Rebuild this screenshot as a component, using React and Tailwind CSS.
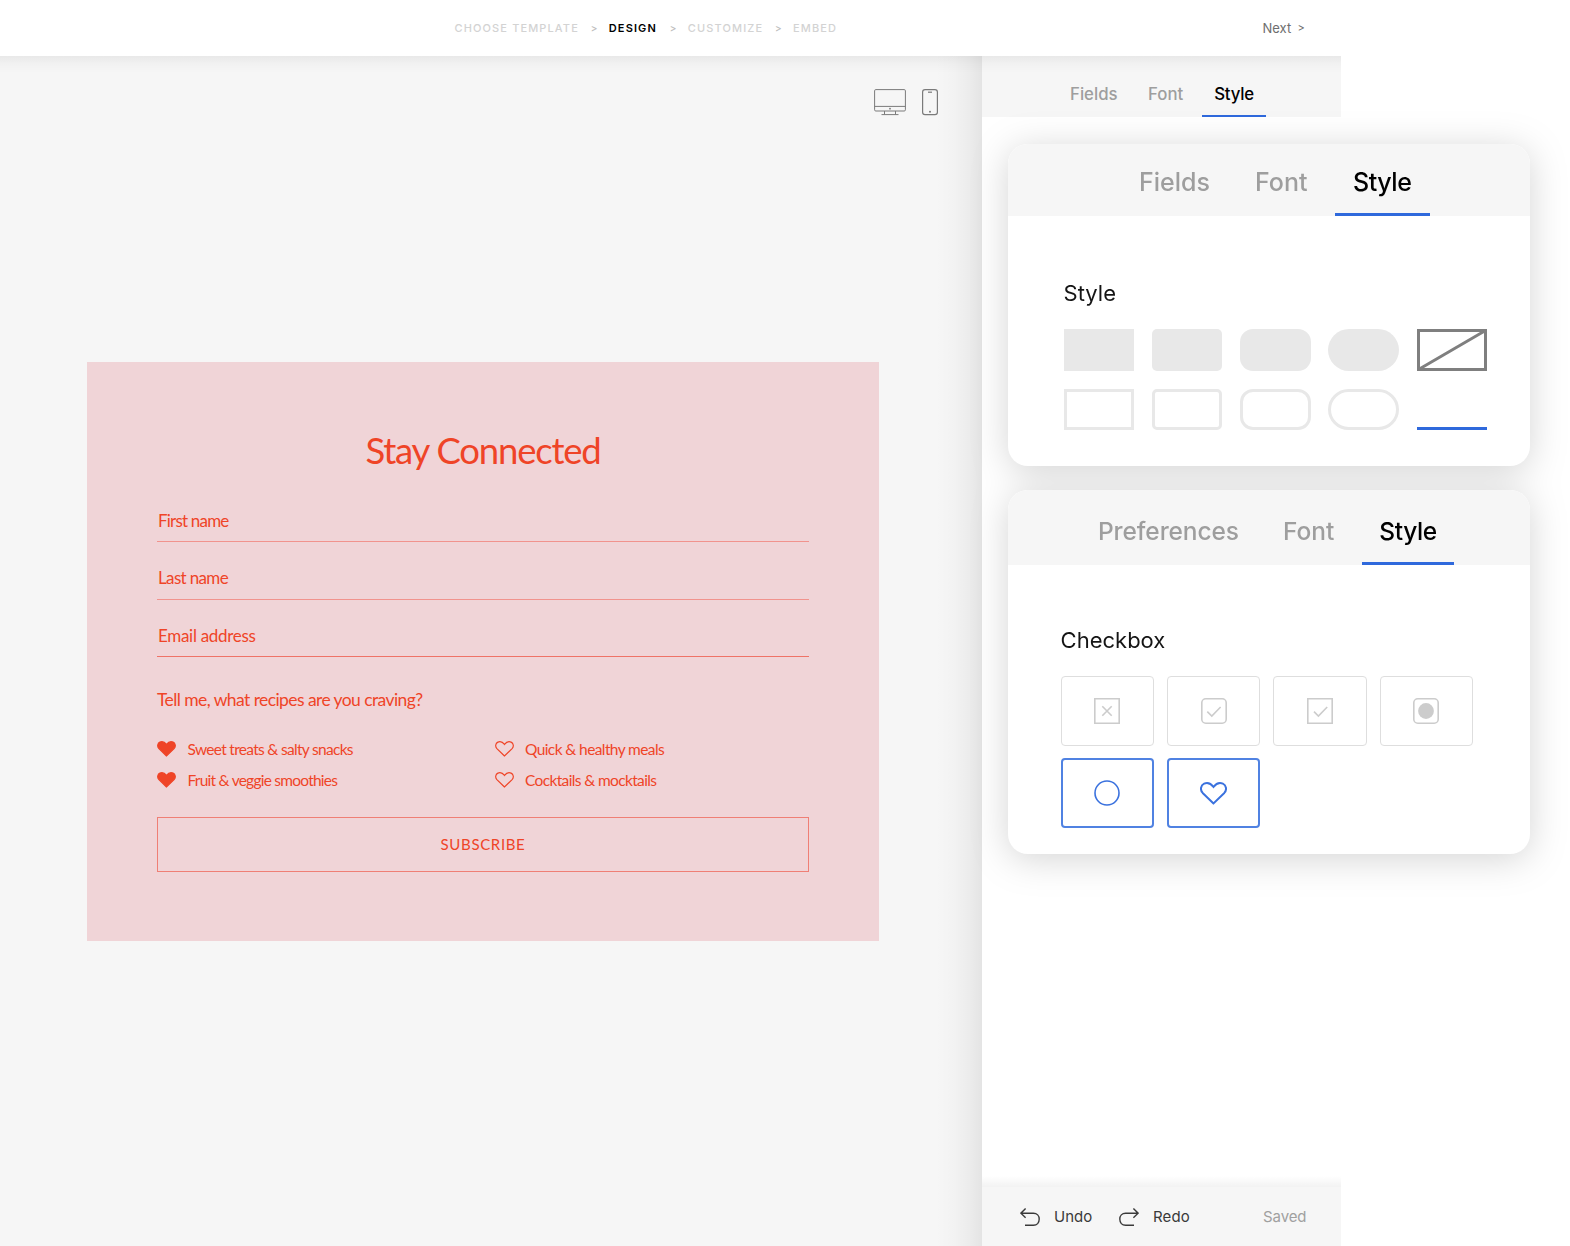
// src/App.jsx
import clsx from 'clsx';

const HEART =
  'M9.5 15 L1.9 7.6 C-0.1 5.5 0.5 2.2 2.9 1.1 C5.2 0.1 7.6 0.9 9.5 3.4 C11.4 0.9 13.8 0.1 16.1 1.1 C18.5 2.2 19.1 5.5 17.1 7.6 Z';

const Heart = ({ className, filled, stroke = 1.3 }) => (
  <svg
    viewBox="0 0 19 16"
    className={className}
    fill={filled ? 'currentColor' : 'none'}
    stroke="currentColor"
    strokeWidth={stroke}
  >
    <path d={HEART} />
  </svg>
);

const Monitor = () => (
  <svg viewBox="0 0 32 27" className="w-8 h-[27px]" fill="none" stroke="currentColor">
    <rect x="0.6" y="0.6" width="30.8" height="21.4" rx="1.2" />
    <path d="M0.6 17.4H31.4M10.5 22V25.4M21.5 22V25.4M7.5 25.6H24.5" />
    <circle cx="16" cy="19.7" r="0.9" fill="currentColor" stroke="none" />
  </svg>
);

const Phone = () => (
  <svg viewBox="0 0 16 27" className="w-4 h-[27px]" fill="none" stroke="currentColor" strokeWidth="1.2">
    <rect x="0.6" y="0.6" width="14.8" height="25" rx="2.4" />
    <path d="M6 3.2H10" />
    <circle cx="8" cy="22.7" r="1" fill="currentColor" stroke="none" />
  </svg>
);

const UndoArrow = ({ className }) => (
  <svg
    viewBox="0 0 20 18"
    className={clsx('w-5 h-[18px]', className)}
    fill="none"
    stroke="currentColor"
    strokeWidth="1.4"
  >
    <path d="M5.6 0.6L0.9 5.2L5.6 9.8M0.9 5.2H13.4C17 5.2 19.2 7.8 19.2 11C19.2 14.5 17 17.2 13.4 17.2H5" />
  </svg>
);

/* Breadcrumb steps shown in the top bar */
const steps = [
  { label: 'CHOOSE TEMPLATE', width: 'w-[136.3px]' },
  { label: 'DESIGN', width: 'w-[61px]', active: true },
  { label: 'CUSTOMIZE', width: 'w-[87.3px]' },
  { label: 'EMBED', width: 'w-[44px]' },
];

const fields = [
  { label: 'First name', line: 'border-[#f1938d] tracking-[-0.8px]' },
  { label: 'Last name', line: 'border-[#f1938d] tracking-[-0.65px]' },
  { label: 'Email address', line: 'border-[#ef7367] tracking-[-0.3px]' },
];

const recipes = [
  { label: 'Sweet treats & salty snacks', checked: true, tracking: 'tracking-[-0.7px]' },
  { label: 'Quick & healthy meals', tracking: 'tracking-[-0.6px]' },
  { label: 'Fruit & veggie smoothies', checked: true, tracking: 'tracking-[-0.76px]' },
  { label: 'Cocktails & mocktails', tracking: 'tracking-[-0.64px]' },
];

const radii = ['rounded-none', 'rounded-[5px]', 'rounded-[13px]', 'rounded-[21px]'];

function TopBar() {
  return (
    <header className="flex items-center h-14 pl-[454.5px] bg-white">
      <nav className="flex w-[808px] text-[11px] leading-[56px] font-medium tracking-[1.12px] text-[#d3d3d3]">
        {steps.map((step, i) => (
          <div key={step.label} className="flex">
            <span className={clsx(step.width, 'whitespace-nowrap', step.active && 'text-black font-semibold')}>
              {step.label}
            </span>
            {i < steps.length - 1 && <span className="w-[18px] text-[10px] text-[#bdbdbd]">&gt;</span>}
          </div>
        ))}
      </nav>
      <button className="flex text-[13px] leading-[55px] text-[#6e6e6e]">
        <span className="w-[35px] text-left">Next</span>
        <span className="text-[11px]">&gt;</span>
      </button>
    </header>
  );
}

function SubscribeForm() {
  return (
    <section className="w-[792px] h-[579px] mt-[246px] ml-[87px] px-[70px] pt-[66px] bg-[#f0d4d7] text-[#ef4427] font-['Lato',sans-serif]">
      <h1 className="h-12 text-center text-[36.5px] leading-[44px] tracking-[-1.2px] whitespace-nowrap">
        Stay Connected
      </h1>

      <div className="pt-[9px]">
        {fields.map((field) => (
          <div
            key={field.label}
            className={clsx('h-[57.33px] pt-[17px] pl-[1px] border-b text-[17px] leading-[37px]', field.line)}
          >
            {field.label}
          </div>
        ))}
      </div>

      <p className="mt-[31px] text-[17.5px] leading-[24px] tracking-[-0.58px]">Tell me, what recipes are you craving?</p>

      <div className="grid grid-cols-[337.5px_1fr] mt-[22px]">
        {recipes.map((recipe) => (
          <div key={recipe.label} className="flex items-center h-[30.5px] gap-[11.5px]">
            <Heart className="w-[19px] h-4" filled={recipe.checked} stroke={1.2} />
            <span className={clsx('text-[15.5px] leading-[30px] whitespace-nowrap', recipe.tracking)}>
              {recipe.label}
            </span>
          </div>
        ))}
      </div>

      <button className="w-full h-[55px] mt-[22px] border border-[#ef7f75] text-[15px] tracking-[0.65px]">
        SUBSCRIBE
      </button>
    </section>
  );
}

function StyleCard() {
  return (
    <section className="w-[522px] h-[322px] rounded-[20px] overflow-hidden bg-white">
      <div className="flex h-[72px] pl-[131px] bg-[#f6f6f6] text-[25px] leading-[76px] font-medium text-[#9e9e9e]">
        <span className="w-[116px]">Fields</span>
        <span className="w-[80px]">Font</span>
        <span className="w-[94.5px] border-b-3 border-[#2f69dc] text-center text-black tracking-[-0.4px]">Style</span>
      </div>
      <div className="pt-[60px] pl-[55.6px]">
        <h2 className="h-[53px] text-[22px] leading-[34px] text-[#151515]">Style</h2>
        <div className="grid grid-cols-[repeat(5,70.4px)] gap-x-[17.9px] gap-y-[18px]">
          {radii.map((radius) => (
            <div key={radius} className={clsx('h-[42px] bg-[#e8e8e8]', radius)} />
          ))}
          <svg viewBox="0 0 70 42" className="w-[70px] h-[42px]" fill="none" stroke="#7f7f7f" strokeWidth="3">
            <path d="M1.5 1.5H68.5V40.5H1.5ZM1.5 40.5L68.5 1.5" />
          </svg>
          {radii.map((radius) => (
            <div key={radius} className={clsx('h-[41px] border-3 border-[#e8e8e8]', radius)} />
          ))}
          <div className="h-[41px] border-b-3 border-[#2f69dc]" />
        </div>
      </div>
    </section>
  );
}

/* Glyph inside each checkbox tile */
const marks = [
  <path d="M0.8 0.8H25.2V25.2H0.8ZM8.3 8.3L17.7 17.7M17.7 8.3L8.3 17.7" />,
  <>
    <rect x="0.8" y="0.8" width="24.4" height="24.4" rx="4" />
    <path d="M6.3 13.6L10.8 18L19.6 9" />
  </>,
  <path d="M0.8 0.8H25.2V25.2H0.8ZM7 13.6L11.4 18L20.2 9" />,
  <>
    <rect x="0.8" y="0.8" width="24.4" height="24.4" rx="4" />
    <circle cx="13" cy="13" r="7.9" fill="currentColor" stroke="none" />
  </>,
  <circle cx="13" cy="13" r="12" />,
];

function CheckboxCard() {
  return (
    <section className="w-[522px] h-[364px] rounded-[20px] overflow-hidden bg-white">
      <div className="flex h-[75px] pl-[90px] bg-[#f6f6f6] text-[24.5px] leading-[83px] font-medium text-[#9e9e9e]">
        <span className="w-[185px] tracking-[-0.1px]">Preferences</span>
        <span className="w-[79px]">Font</span>
        <span className="w-[92px] border-b-3 border-[#2f69dc] text-center text-black tracking-[-0.4px]">Style</span>
      </div>
      <div className="pt-[58px] pl-[52.6px]">
        <h2 className="h-[53px] text-[22px] leading-[34px] text-[#151515]">Checkbox</h2>
        <div className="grid grid-cols-[repeat(4,93.3px)] gap-x-[13.1px] gap-y-[12px]">
          {marks.map((mark, i) => (
            <div
              key={i}
              className={clsx(
                'flex items-center justify-center h-[70px] rounded-[4px]',
                i === 4 ? 'border-2 border-[#5082e2] text-[#3b72de]' : 'border border-[#dedede] text-[#cccccc]'
              )}
            >
              <svg viewBox="0 0 26 26" className="w-[26px] h-[26px]" fill="none" stroke="currentColor" strokeWidth="1.6">
                {mark}
              </svg>
            </div>
          ))}
          <div className="flex items-center justify-center h-[70px] rounded-[4px] border-2 border-[#5082e2] text-[#3b72de]">
            <Heart className="w-[27px] h-[23px]" stroke={1.4} />
          </div>
        </div>
      </div>
    </section>
  );
}

function SidePanel() {
  return (
    <aside className="flex flex-col w-[359px] h-[1190px] bg-white">
      <div className="flex shrink-0 h-[61px] pl-[88px] bg-[#f6f6f6] bg-[linear-gradient(to_bottom,rgba(0,0,0,0.055),rgba(0,0,0,0.02)_8px,transparent_17px)] text-[16.8px] leading-[77px] font-medium text-[#9e9e9e]">
        <span className="w-[78px]">Fields</span>
        <span className="w-[54px]">Font</span>
        <span className="w-[64px] border-b-2 border-[#2f69dc] text-center text-black tracking-[-0.2px]">Style</span>
      </div>

      <div className="flex flex-col w-[522px] gap-6 mt-[27px] ml-[26px] drop-shadow-[0_5px_18px_rgba(0,0,0,0.17)]">
        <StyleCard />
        <CheckboxCard />
      </div>

      <div className="h-[11px] mt-auto bg-linear-to-b from-transparent to-black/5" />
      <footer className="flex items-center shrink-0 h-[59px] pl-[38px] bg-[#f6f6f6] text-[15px] leading-[22px] text-[#3a3a3a]">
        <UndoArrow />
        <span className="w-[65px] ml-[14px] pt-px">Undo</span>
        <UndoArrow className="-scale-x-100" />
        <span className="w-[110px] ml-[14px] pt-px tracking-[0.1px]">Redo</span>
        <span className="pt-px text-[#a0a0a0] tracking-[-0.1px]">Saved</span>
      </footer>
    </aside>
  );
}

function App() {
  return (
    <div className="w-[1570px] h-[1246px] overflow-hidden bg-white font-['Inter',sans-serif]">
      <TopBar />
      <div className="flex">
        <main className="w-[982px] h-[1190px] bg-[#f6f6f6] bg-[linear-gradient(to_bottom,rgba(0,0,0,0.055),rgba(0,0,0,0.02)_8px,transparent_17px),linear-gradient(to_left,rgba(0,0,0,0.075),rgba(0,0,0,0.045)_12px,rgba(0,0,0,0.015)_28px,transparent_46px)]">
          <div className="flex gap-4 pt-[33px] pl-[874px] h-[60px] text-[#7a7a7a]">
            <Monitor />
            <Phone />
          </div>
          <SubscribeForm />
        </main>
        <SidePanel />
      </div>
    </div>
  );
}

export default App;
